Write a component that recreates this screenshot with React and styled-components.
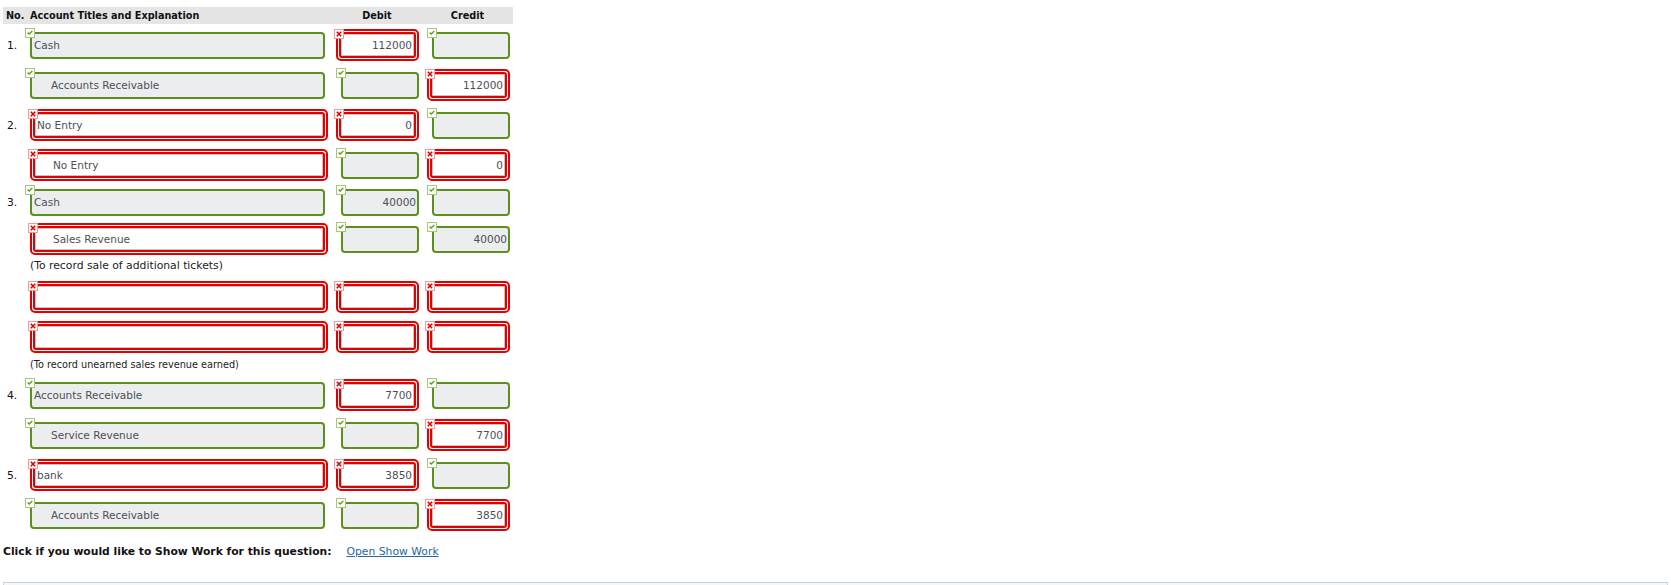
import React from 'react';
import styled, { createGlobalStyle } from 'styled-components';

const GlobalStyle = createGlobalStyle`
  body {
    margin: 0;
    background: #fff;
    font-family: "DejaVu Sans", Verdana, sans-serif;
    color: #111;
  }
`;

const Page = styled.div`
  padding: 7px 3px 0;
`;

const Journal = styled.div`
  width: 510px;
`;

const Grid = styled.div`
  display: grid;
  grid-template-columns: 27px 302px 90px 91px;
  align-items: center;
`;

const HeaderRow = styled(Grid)`
  height: 17px;
  background: #e5e5e5;
  margin-bottom: 1px;
  font-weight: bold;
  font-size: 9.7px;
  line-height: 17px;
  color: #111;
`;

const HeadCell = styled.div`
  padding-left: ${p => (p.$first ? '3px' : '0')};
  text-align: ${p => p.$center ? 'center' : 'left'};
  white-space: nowrap;
`;

const EntryRow = styled(Grid)`
  height: ${p => (p.$short ? 34 : 40)}px;
`;

const NoCell = styled.div`
  padding-left: 4px;
  font-size: 10.8px;
  color: #111;
`;

const Cell = styled.div`
  display: flex;
  justify-content: ${p => (p.$amount ? 'flex-end' : 'flex-start')};
  padding-right: ${p => (p.$amount ? '3px' : '0')};
`;

const NoteRow = styled(Grid)`
  align-items: start;
`;

const Note = styled.div`
  grid-column: 2 / 5;
  height: 18px;
  padding-top: ${p => (p.$narrow ? 1 : 0)}px;
  box-sizing: border-box;
  font-family: ${p => (p.$narrow ? '"DejaVu Sans Condensed", "DejaVu Sans", sans-serif' : 'inherit')};
  font-stretch: ${p => (p.$narrow ? 'semi-condensed' : 'normal')};
  font-size: 10.8px;
  line-height: 13px;
  color: #1c1c1c;
  white-space: nowrap;
`;

const GoodBox = styled.div`
  position: relative;
  box-sizing: border-box;
  width: ${p => (p.$amount ? 78 : 295)}px;
  height: 27px;
  border: 2px solid #5d8f1c;
  border-radius: 4px;
  background: #ebedef;
  display: flex;
  align-items: center;
  justify-content: ${p => (p.$amount ? 'flex-end' : 'flex-start')};
  padding: 0 1px 0 ${p => (p.$indent ? 19 : 2)}px;
`;

const BadBox = styled.div`
  position: relative;
  box-sizing: border-box;
  width: ${p => (p.$amount ? 83 : 298)}px;
  height: 32px;
  border: 2px solid #e30000;
  border-radius: 5px;
  padding: 1px;
  background: #fff;
`;

const BadInner = styled.div`
  box-sizing: border-box;
  height: 100%;
  border: 2px solid #e30000;
  border-radius: 3px;
  box-shadow: inset 0 0 0 1px #c4c4c4;
  background: #fff;
  display: flex;
  align-items: center;
  justify-content: ${p => (p.$amount ? 'flex-end' : 'flex-start')};
  padding: 0 2px 0 ${p => (p.$indent ? 18 : 2)}px;
`;

const Value = styled.span`
  font-size: 10.5px;
  color: #4d4f59;
  white-space: nowrap;
`;

const Badge = styled.span`
  position: absolute;
  left: ${p => (p.$ok ? -7 : -4)}px;
  top: ${p => (p.$ok ? -6 : -2)}px;
  box-sizing: border-box;
  width: 10px;
  height: 10px;
  border: 1px solid ${p => (p.$ok ? '#a8c779' : '#f09a9a')};
  background: #fff;
  display: flex;
  align-items: center;
  justify-content: center;
  z-index: 2;
`;

const CheckIcon = () => (
  <svg width="6" height="5" viewBox="0 0 6 5">
    <path d="M0.6 2.6 L2.2 4 L5.4 0.9" fill="none" stroke="#5b961e" strokeWidth="1.3" />
  </svg>
);

const CrossIcon = () => (
  <svg width="6" height="6" viewBox="0 0 6 6">
    <path d="M0.8 0.8 L5.2 5.2 M5.2 0.8 L0.8 5.2" fill="none" stroke="#e00000" strokeWidth="1.6" />
  </svg>
);

const Field = ({ ok, text = '', amount, indent }) => {
  if (ok) {
    return (
      <GoodBox $amount={amount} $indent={indent}>
        <Badge $ok><CheckIcon /></Badge>
        <Value>{text}</Value>
      </GoodBox>
    );
  }
  return (
    <BadBox $amount={amount}>
      <Badge><CrossIcon /></Badge>
      <BadInner $amount={amount} $indent={indent}>
        <Value>{text}</Value>
      </BadInner>
    </BadBox>
  );
};

const ShowWork = styled.div`
  margin-top: 10px;
  display: flex;
  gap: 15px;
  font-size: 10.8px;
  line-height: 13px;
  white-space: nowrap;
`;

const Prompt = styled.span`
  font-weight: bold;
  font-size: 10.75px;
  color: #111;
`;

const Link = styled.a`
  color: #2566a6;
  text-decoration: underline;
  cursor: pointer;
`;

const Panel = styled.div`
  margin-top: 24px;
  height: 40px;
  border: 1px solid #c9d3dc;
  background: #f3f8fc;
`;

const blank = { account: { ok: false }, debit: { ok: false }, credit: { ok: false } };

const rows = [
  { no: '1.', account: { ok: true, text: 'Cash' }, debit: { ok: false, text: '112000' }, credit: { ok: true } },
  { account: { ok: true, text: 'Accounts Receivable', indent: true }, debit: { ok: true }, credit: { ok: false, text: '112000' } },
  { no: '2.', account: { ok: false, text: 'No Entry' }, debit: { ok: false, text: '0' }, credit: { ok: true } },
  { account: { ok: false, text: 'No Entry', indent: true }, debit: { ok: true }, credit: { ok: false, text: '0' } },
  { no: '3.', short: true, account: { ok: true, text: 'Cash' }, debit: { ok: true, text: '40000' }, credit: { ok: true } },
  { account: { ok: false, text: 'Sales Revenue', indent: true }, debit: { ok: true }, credit: { ok: true, text: '40000' } },
  { note: '(To record sale of additional tickets)' },
  blank,
  blank,
  { note: '(To record unearned sales revenue earned)', narrow: true },
  { no: '4.', account: { ok: true, text: 'Accounts Receivable' }, debit: { ok: false, text: '7700' }, credit: { ok: true } },
  { account: { ok: true, text: 'Service Revenue', indent: true }, debit: { ok: true }, credit: { ok: false, text: '7700' } },
  { no: '5.', account: { ok: false, text: 'bank' }, debit: { ok: false, text: '3850' }, credit: { ok: true } },
  { account: { ok: true, text: 'Accounts Receivable', indent: true }, debit: { ok: true }, credit: { ok: false, text: '3850' } },
];

export default function App() {
  return (
    <Page>
      <GlobalStyle />
      <Journal>
        <HeaderRow>
          <HeadCell $first>No.</HeadCell>
          <HeadCell>Account Titles and Explanation</HeadCell>
          <HeadCell $center>Debit</HeadCell>
          <HeadCell $center>Credit</HeadCell>
        </HeaderRow>
        {rows.map((row, i) =>
          row.note ? (
            <NoteRow key={i}>
              <Note $narrow={row.narrow}>{row.note}</Note>
            </NoteRow>
          ) : (
            <EntryRow key={i} $short={row.short}>
              <NoCell>{row.no}</NoCell>
              <Cell>
                <Field {...row.account} />
              </Cell>
              <Cell $amount>
                <Field {...row.debit} amount />
              </Cell>
              <Cell $amount>
                <Field {...row.credit} amount />
              </Cell>
            </EntryRow>
          )
        )}
      </Journal>
      <ShowWork>
        <Prompt>Click if you would like to Show Work for this question:</Prompt>
        <Link>Open Show Work</Link>
      </ShowWork>
      <Panel />
    </Page>
  );
}
